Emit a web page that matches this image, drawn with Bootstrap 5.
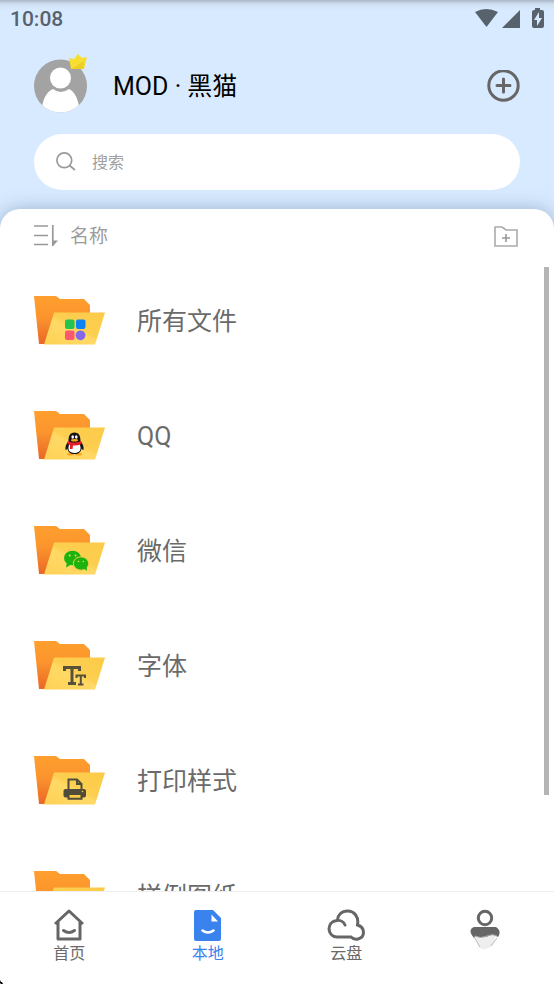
<!DOCTYPE html>
<html lang="zh-CN">
<head>
<meta charset="utf-8">
<meta name="viewport" content="width=device-width, initial-scale=1">
<title>本地</title>
<link rel="stylesheet" href="https://cdn.jsdelivr.net/npm/bootstrap@5.3.0/dist/css/bootstrap.min.css">
<style>
body { font-family: Roboto, "Noto Sans CJK SC", sans-serif; background: #d8eaff; color: #666; }
svg { display: block; flex: none; }
.status { height: 38px; padding: 0 10px; color: #58626d; font-size: 21px; line-height: 38px; font-weight: 500; background: linear-gradient(#a9b5c5, #cfdff1 4px, #d8eaff 10px); }
.profile { height: 96px; padding: 0 34px; }
.avatar { width: 53px; margin-right: 26px; padding-bottom: 6px; }
.user-name { font-size: 25px; line-height: 36px; color: #000; font-weight: 400; padding-top: 2px; }
.search { margin: 0 34px; height: 56px; padding: 0 22px; }
.search input { font-size: 16px; line-height: 24px; color: #666; padding: 2px 0 0; margin-left: 16px; }
.search input::placeholder { color: #a0a0a0; opacity: 1; }
.search input:focus { box-shadow: none; }
.sheet { margin-top: 19px; border-radius: 20px 20px 0 0; box-shadow: 0 0 18px rgba(95, 125, 155, .5); }
.sort-bar { height: 54px; padding: 0 36px 0 34px; }
.sort-bar .btn-plain { font-size: 19px; line-height: 28px; color: #9c9c9c; gap: 12px; }
.sort-bar span { padding-top: 2px; }
.btn-plain { background: none; border: 0; padding: 0; color: inherit; }
.file-row { height: 115px; padding: 0 34px; gap: 32px; font-size: 25px; line-height: 36px; color: #6a6a6a; }
.file-row span { padding-top: 2px; }
.scroll-thumb { top: 4px; right: 5px; width: 5px; height: 84%; background: #b5b5b5; }
.tabs { height: 93px; border-top: 1px solid #eee; z-index: 2; }
.tab { font-size: 16px; line-height: 20px; color: #6a6a6a; padding-top: 15px; gap: 3px; }
.tab.current { color: #3a82ee; }
.corner { left: 0; bottom: 0; z-index: 3; }
</style>
<script src="https://cdn.jsdelivr.net/npm/bootstrap@5.3.0/dist/js/bootstrap.bundle.min.js"></script>
</head>
<body class="vh-100 d-flex flex-column overflow-hidden position-relative">
<svg width="0" height="0" class="position-absolute" aria-hidden="true">
  <defs>
    <linearGradient id="back" x1="0" y1="0" x2="0" y2="1"><stop offset="0" stop-color="#ff9f2e"/><stop offset=".45" stop-color="#fb942d"/><stop offset="1" stop-color="#ea6726"/></linearGradient>
    <linearGradient id="front" x1="0" y1="1" x2="1" y2="0"><stop offset="0" stop-color="#ffd155"/><stop offset=".45" stop-color="#ffd966"/><stop offset=".55" stop-color="#fdcf50"/><stop offset="1" stop-color="#fcca48"/></linearGradient>
    <symbol id="folder" viewBox="0 0 71 49">
      <path d="M0 0H22L26 3H50L56 9V17H40L14 48H5Z" fill="url(#back)"/>
      <path d="M20 16.500H71L61 48.500H10Z" fill="url(#front)"/>
    </symbol>
  </defs>
</svg>

<div class="status d-flex align-items-center justify-content-between flex-shrink-0">
  <time>10:08</time>
  <svg width="70" height="22" viewBox="0 0 70 22" fill="#58626d" role="img" aria-label="信号和电量">
    <path d="M1 4Q12-2 24 4L12.500 19Z"/><path d="M46 2V20H28Z"/>
    <path fill-rule="evenodd" d="M61 0h5v2h2q2 0 2 2v14q0 2-2 2h-8q-2 0-2-2V4q0-2 2-2h1ZM65 4l-5 8h3v6l5-8h-3Z"/>
  </svg>
</div>

<header class="profile d-flex align-items-center flex-shrink-0">
  <div class="avatar">
    <svg width="53" height="59" viewBox="0 0 53 59" overflow="visible" role="img" aria-label="头像">
      <defs><clipPath id="disc"><circle cx="26.500" cy="32" r="26.500"/></clipPath></defs>
      <g clip-path="url(#disc)"><path d="M0 5h53v54H0Z" fill="#a3a3a3"/>
      <circle cx="26.500" cy="24" r="10.500" fill="#fff"/><path d="M7 59Q9 39 19 35Q26.500 41 35 35Q44 39 46 59Z" fill="#fff"/></g>
      <path d="M35 4L40 5L44 0L48 4L53 3L50 15H37Z" fill="#f6df2f"/><path d="M37 15L50 7V15Z" fill="#edcf25"/>
    </svg>
  </div>
  <h1 class="user-name mb-0 flex-grow-1">MOD · 黑猫</h1>
  <button class="btn-plain" type="button" aria-label="添加">
    <svg width="33" height="33" viewBox="0 0 33 33" fill="none" stroke="#666" stroke-width="3"><circle cx="16.500" cy="15.500" r="14.700"/><path d="M16.500 9v13M10 15.500h13" stroke-linecap="round"/></svg>
  </button>
</header>

<form class="search d-flex align-items-center bg-white rounded-pill flex-shrink-0" role="search">
  <label for="query"><svg width="20" height="20" viewBox="0 0 20 20" fill="none" stroke="#999" stroke-width="1.700" role="img" aria-label="搜索"><circle cx="8.300" cy="8.300" r="7.400"/><path d="M13.500 13.500L19 18"/></svg></label>
  <input id="query" class="form-control border-0 bg-transparent" type="text" placeholder="搜索">
</form>

<main class="sheet bg-white flex-grow-1 d-flex flex-column overflow-hidden">
  <div class="sort-bar d-flex align-items-center justify-content-between flex-shrink-0">
    <button class="btn-plain d-flex align-items-center" type="button">
      <svg width="24" height="22" viewBox="0 0 24 22" fill="none" stroke="#999" stroke-width="1.700"><path d="M0 1h14M0 10.500h14M0 19.500h14M18.800 0v21"/><path d="M19 15.500h5L19 21Z" fill="#999" stroke="none"/></svg>
      <span>名称</span>
    </button>
    <button class="btn-plain" type="button" aria-label="新建文件夹">
      <svg width="24" height="21" viewBox="0 0 24 21" fill="none" stroke="#aaa" stroke-width="1.600"><path d="M1 1h7l4 3h11v16H1Z"/><path d="M12 8v8M8 12h8" stroke="#999"/></svg>
    </button>
  </div>
  <div class="position-relative flex-grow-1 overflow-hidden">
    <div class="d-flex flex-column">
      <a href="#" class="file-row d-flex align-items-center flex-shrink-0 text-decoration-none">
        <svg width="71" height="49" viewBox="0 0 71 49"><use href="#folder"/><rect x="31" y="23.500" width="9.500" height="9.500" rx="2" fill="#24c34f"/><rect x="42" y="23.500" width="9.500" height="9.500" rx="2" fill="#0b83f5"/><rect x="31" y="34.500" width="9.500" height="9.500" rx="2" fill="#fb596e"/><circle cx="46.500" cy="39.300" r="4.900" fill="#8468e8"/></svg>
        <span>所有文件</span>
      </a>
      <a href="#" class="file-row d-flex align-items-center flex-shrink-0 text-decoration-none">
        <svg width="71" height="49" viewBox="0 0 71 49"><use href="#folder"/><ellipse cx="36.500" cy="43.200" rx="3.500" ry="1.300" fill="#f8a51b"/><ellipse cx="44.500" cy="43.200" rx="3.500" ry="1.300" fill="#f8a51b"/><path d="M40.500 21.500C36 21.500 34.500 25 34.500 30C32 33 31 36 31.500 39C32.500 39 33 38 33.500 37.500C34 41 36 43 40.500 43S47 41 47.500 37.500C48 38 48.500 39 49.500 39C50 36 49 33 46.500 30C46.500 25 45 21.500 40.500 21.500Z" fill="#151315"/><path d="M35.500 33H45.500C48 38 46 42 40.500 42S33 38 35.500 33Z" fill="#fff"/><path d="M34 30Q40.500 33 47 30L47.500 33Q43 35 39 34.500L38.500 38H36V34L33.500 33Z" fill="#e51d2a"/><ellipse cx="38.700" cy="26" rx="1.300" ry="1.800" fill="#fff"/><ellipse cx="42.300" cy="26" rx="1.300" ry="1.800" fill="#fff"/><ellipse cx="40.500" cy="29.300" rx="3.600" ry="1.200" fill="#f8a51b"/></svg>
        <span>QQ</span>
      </a>
      <a href="#" class="file-row d-flex align-items-center flex-shrink-0 text-decoration-none">
        <svg width="71" height="49" viewBox="0 0 71 49"><use href="#folder"/><ellipse cx="38.500" cy="32" rx="8.500" ry="7.300" fill="#1db30e"/><path d="M33 36L32 41.500L38 38Z" fill="#1db30e"/><ellipse cx="47" cy="37.500" rx="7.700" ry="6.700" fill="#1db30e" stroke="#fccb48"/><path d="M49 42L53 45L52.500 40Z" fill="#1db30e"/><g fill="#e8d65b"><circle cx="35.700" cy="29.500" r="1"/><circle cx="41.500" cy="29.500" r="1"/><circle cx="44.500" cy="35.500" r=".8"/><circle cx="49.300" cy="35.500" r=".8"/></g></svg>
        <span>微信</span>
      </a>
      <a href="#" class="file-row d-flex align-items-center flex-shrink-0 text-decoration-none">
        <svg width="71" height="49" viewBox="0 0 71 49"><use href="#folder"/><g fill="none" stroke="#57513c"><path d="M30.500 30V26.500H45.500V30M38 26V43M34 42.500h8" stroke-width="3"/><path d="M42.500 37V34.500H51V37M46.800 35V43.500M44 43.500h5.500" stroke-width="2"/></g></svg>
        <span>字体</span>
      </a>
      <a href="#" class="file-row d-flex align-items-center flex-shrink-0 text-decoration-none">
        <svg width="71" height="49" viewBox="0 0 71 49"><use href="#folder"/><path d="M34.500 33V23.500H43L47.500 28V33M43 23.500V28H47.500" fill="none" stroke="#504c3a" stroke-width="2"/><rect x="29.500" y="33" width="22.500" height="8.500" rx="2" fill="#504c3a"/><path d="M34.500 38H47.500V42.700H34.500Z" fill="#fccb48" stroke="#504c3a" stroke-width="2"/><circle cx="48.500" cy="35.500" r=".8" fill="#fccb48"/></svg>
        <span>打印样式</span>
      </a>
      <a href="#" class="file-row d-flex align-items-center flex-shrink-0 text-decoration-none">
        <svg width="71" height="49" viewBox="0 0 71 49"><use href="#folder"/></svg>
        <span>样例图纸</span>
      </a>
    </div>
    <div class="scroll-thumb position-absolute"></div>
  </div>
</main>

<nav class="tabs bg-white d-flex flex-shrink-0" aria-label="主导航">
  <a href="#" class="tab d-flex flex-column align-items-center text-decoration-none col-3">
    <svg width="30" height="34" viewBox="0 0 30 34" fill="none" stroke="#666" stroke-width="3"><path d="M1 17L15 4L29 17M4 15V32H26V15" stroke-linejoin="round"/><path d="M9.500 23.500Q15 27.500 20.500 23.500" stroke-linecap="round"/></svg>
    首页
  </a>
  <a href="#" class="tab current d-flex flex-column align-items-center text-decoration-none col-3" aria-current="page">
    <svg width="28" height="34" viewBox="0 0 28 34"><path d="M2 3H19L27 11V32Q27 34 25 34H2Q0 34 0 32V5Q0 3 2 3Z" fill="#3a82ee"/><path d="M17.500 7.500V14.500H24Z" fill="#fff"/><path d="M8.500 23.500Q14 27.500 19.500 23.500" fill="none" stroke="#fff" stroke-width="2.600" stroke-linecap="round"/></svg>
    本地
  </a>
  <a href="#" class="tab d-flex flex-column align-items-center text-decoration-none col-3">
    <svg width="38" height="34" viewBox="0 0 38 34" fill="none" stroke="#666" stroke-width="3" stroke-linecap="round"><path d="M18 18C16.500 14.500 13 13 10 13.500C4.500 14 2 18 2 22C2.500 27 6 30 10 30H24C26 32 29 32.500 31 32C35 31 36.500 28 36.500 25.500C36.500 21.500 34 19 30.500 18C32 10 27.500 4 20.500 4C14.500 4 11 8 10.500 13"/></svg>
    云盘
  </a>
  <a href="#" class="tab d-flex flex-column align-items-center text-decoration-none col-3" aria-label="我的">
    <svg width="30" height="43" viewBox="0 0 30 43"><circle cx="15" cy="11" r="6.700" fill="none" stroke="#666" stroke-width="3"/><path d="M3 27L27 27L22 39Q15 45 9 40Z" fill="#eee"/><path d="M4 20H26Q32 24 28 30Q23 26 16 30Q9 31 5 29L4 31Q-3 23 4 20Z" fill="#666"/><path d="M5 29Q10 32 17 29Q23 26 27 29" fill="none" stroke="#aaa"/><path d="M4 30L10 40M27 31L21 39" fill="none" stroke="#bbb"/></svg>
  </a>
</nav>
<svg class="corner position-absolute" width="3" height="4" viewBox="0 0 3 4" aria-hidden="true"><path d="M0 0L1 2H2L3 4H1L0 3Z" fill="#000"/></svg>
</body>
</html>
